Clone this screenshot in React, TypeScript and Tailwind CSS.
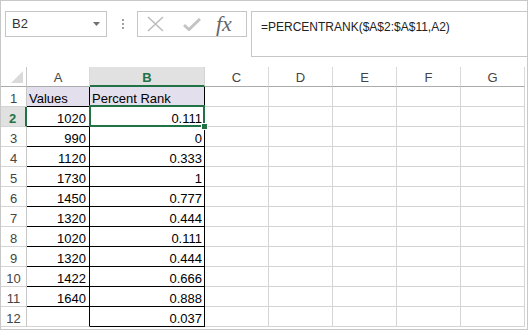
import React from "react";

const columns = [
  { key: "A", width: "w-[63px]" },
  { key: "B", width: "w-[115px]" },
  { key: "C", width: "w-[64px]" },
  { key: "D", width: "w-[64px]" },
  { key: "E", width: "w-[64px]" },
  { key: "F", width: "w-[64px]" },
  { key: "G", width: "w-[64px]" },
];

const rows: [string, string][] = [
  ["Values", "Percent Rank"],
  ["1020", "0.111"],
  ["990", "0"],
  ["1120", "0.333"],
  ["1730", "1"],
  ["1450", "0.777"],
  ["1320", "0.444"],
  ["1020", "0.111"],
  ["1320", "0.444"],
  ["1422", "0.666"],
  ["1640", "0.888"],
  ["", "0.037"],
];

const GREEN = "#217346";

const FormulaBar = () => (
  <div className="flex h-[66px] items-start pt-[10px] pl-[4px]">
    <div className="flex h-[26px] w-[102px] items-center justify-between border border-[#c6c6c6] pl-[6px] pr-[6px] text-[13px] text-[#333]">
      <span>B2</span>
      <svg width="7" height="4" viewBox="0 0 7 4">
        <path d="M0 0 L7 0 L3.5 4 Z" fill="#707070" />
      </svg>
    </div>
    <div className="flex h-[26px] w-[30px] flex-col items-center justify-center gap-[2px] pl-[1px]">
      <span className="h-[2px] w-[2px] bg-[#a0a0a0]" />
      <span className="h-[2px] w-[2px] bg-[#a0a0a0]" />
      <span className="h-[2px] w-[2px] bg-[#a0a0a0]" />
    </div>
    <div className="flex h-[26px] w-[110px] items-center border border-[#c6c6c6] pl-[9px]">
      <svg width="17" height="16" viewBox="0 0 17 16">
        <path d="M1 1 L16 15 M16 1 L1 15" stroke="#bdbdbd" strokeWidth="1.6" fill="none" />
      </svg>
      <svg className="ml-[19px]" width="18" height="13" viewBox="0 0 18 13">
        <path d="M1 7 L6 11.5 L17 1" stroke="#c4c4c4" strokeWidth="3" fill="none" />
      </svg>
      <span className="ml-[15px] font-['Liberation_Serif'] text-[22px] italic leading-none text-[#666]">
        fx
      </span>
    </div>
    <div className="ml-[4px] flex h-[46px] flex-1 items-start border-y border-l border-[#c6c6c6] pt-[6px] pl-[9px] text-[12px] text-[#222]">
      =PERCENTRANK($A$2:$A$11,A2)
    </div>
  </div>
);

const App = () => {
  return (
    <div className="relative h-[330px] w-[528px] overflow-hidden border border-[#c8c8c8] bg-white font-['Liberation_Sans',sans-serif]">
      <FormulaBar />

      {/* column headers */}
      <div className="flex h-[20px] text-[13px] leading-[15px]">
        <div className="flex w-[26px] items-end justify-end border-r border-b border-r-[#c8c8c8] border-b-[#ababab] pr-[3px] pb-[3px]">
          <svg width="12" height="12" viewBox="0 0 12 12">
            <path d="M12 0 L12 12 L0 12 Z" fill="#dadada" />
          </svg>
        </div>
        {columns.map((c) =>
          c.key === "B" ? (
            <div
              key={c.key}
              className={`${c.width} flex items-end justify-center border-r border-b-2 border-r-[#d4d4d4] border-b-[#217346] bg-[#e1e1e1] pb-0 font-bold text-[#217346]`}
            >
              {c.key}
            </div>
          ) : (
            <div
              key={c.key}
              className={`${c.width} flex items-end justify-center border-r border-b border-r-[#d9d9d9] border-b-[#ababab] pb-[1px] text-[#444]`}
            >
              {c.key}
            </div>
          )
        )}
      </div>

      {rows.map(([a, b], i) => {
        const n = i + 1;
        const isHead = n === 1;
        const aBorder = n <= 11 ? "border-b-black" : "border-b-[#d4d4d4]";
        return (
          <div key={n} className="flex h-[20px] text-[13px] leading-[15px]">
            {n === 2 ? (
              <div className="flex w-[26px] items-end justify-center border-r-2 border-b border-r-[#217346] border-b-[#d4d4d4] bg-[#e1e1e1] pr-[1px] font-bold text-[#217346]">
                {n}
              </div>
            ) : (
              <div className="flex w-[26px] items-end justify-center border-r border-b border-r-[#c8c8c8] border-b-[#d4d4d4] text-[#444]">
                {n}
              </div>
            )}
            <div
              className={`flex w-[63px] items-end border-r border-b border-r-black ${aBorder} ${
                isHead ? "justify-start bg-[#e4dfec] pl-[2px]" : "justify-end pr-[3px]"
              } text-black`}
            >
              {a}
            </div>
            <div
              className={`flex w-[115px] items-end border-r border-b border-r-black border-b-black ${
                isHead ? "justify-start bg-[#e4dfec] pl-[2px]" : "justify-end pr-[2px]"
              } text-black`}
            >
              {b}
            </div>
            {columns.slice(2).map((c) => (
              <div
                key={c.key}
                className={`${c.width} border-r border-b border-r-[#d4d4d4] border-b-[#d4d4d4]`}
              />
            ))}
          </div>
        );
      })}

      {/* active cell B2 */}
      <div className="absolute top-[104px] left-[88px] h-[22px] w-[116px] border-2 border-[#217346]" />
      <div
        className="absolute top-[122px] left-[200px] h-[7px] w-[7px] border border-white"
        style={{ backgroundColor: GREEN }}
      />
    </div>
  );
};

export default App;
